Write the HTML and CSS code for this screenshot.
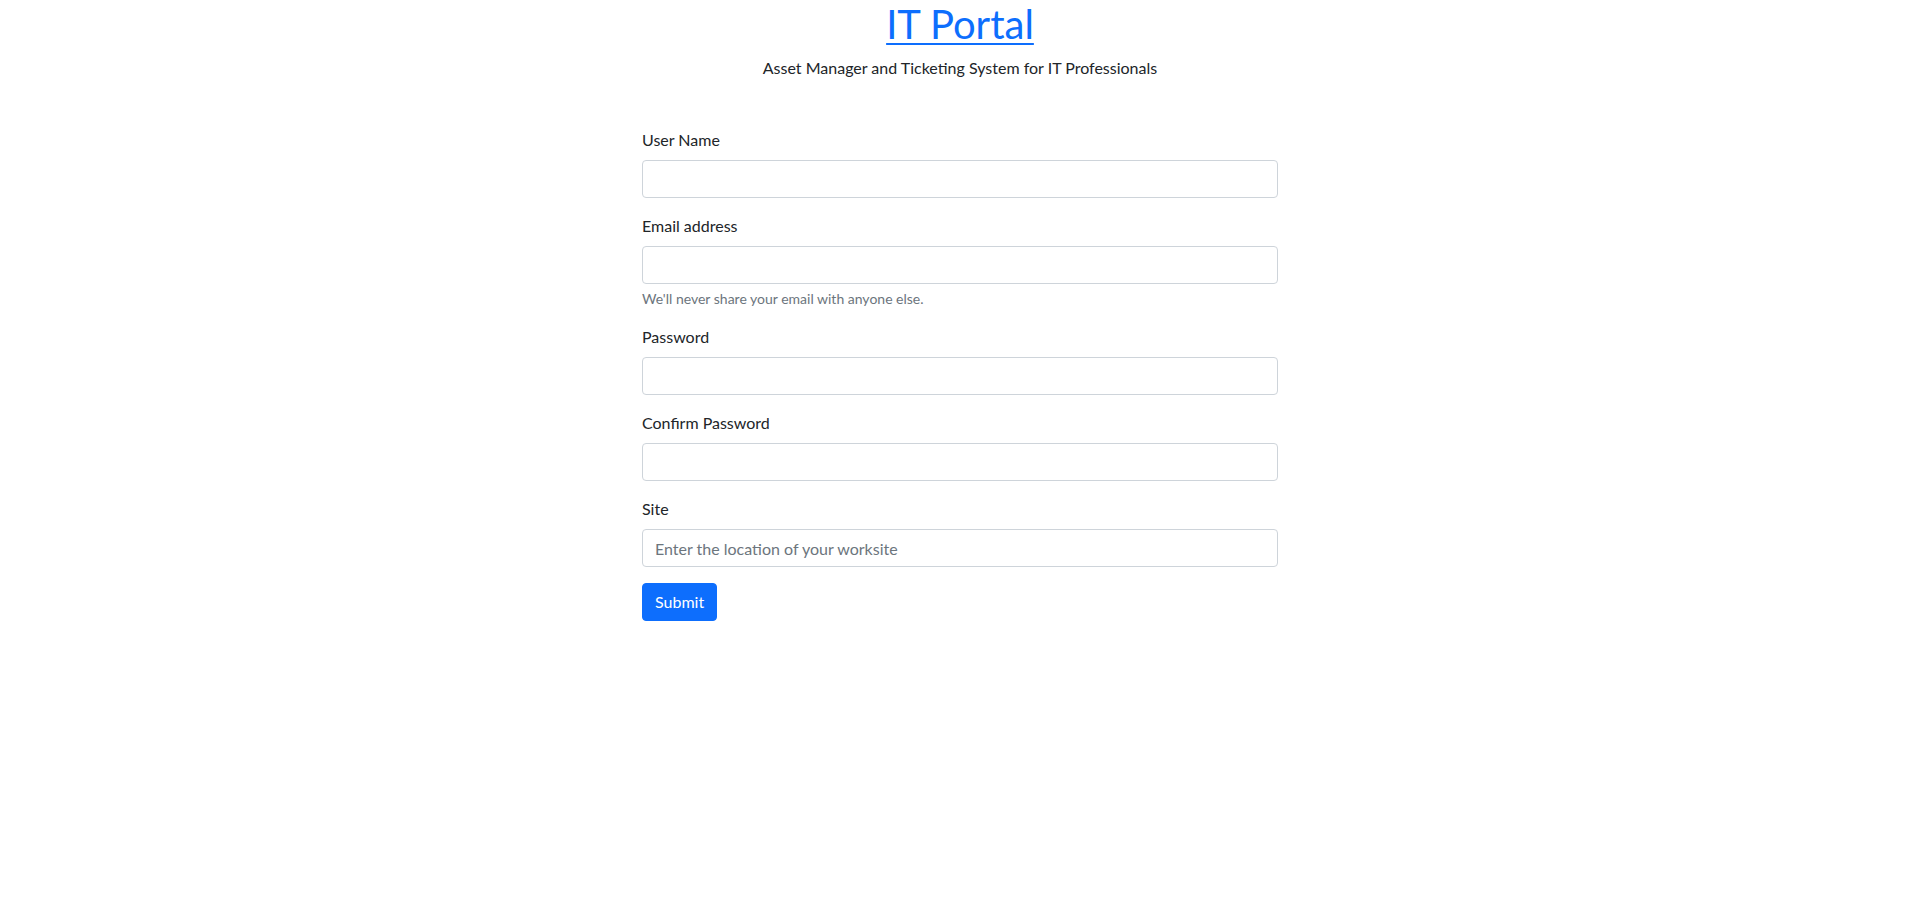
FILE: index.html
```html
<!DOCTYPE html>
<html lang="en">
<head>
<meta charset="utf-8">
<title>IT Portal</title>
<link rel="stylesheet" href="styles.css">
</head>
<body>
<header class="header">
  <h1 class="title"><a href="#" class="title-link">IT Portal</a></h1>
  <p class="subtitle">Asset Manager and Ticketing System for IT Professionals</p>
</header>
<form class="form">
  <div class="group">
    <label class="label" for="username">User Name</label>
    <input class="control" id="username" type="text">
  </div>
  <div class="group">
    <label class="label" for="email">Email address</label>
    <input class="control" id="email" type="email">
    <div class="help">We'll never share your email with anyone else.</div>
  </div>
  <div class="group">
    <label class="label" for="password">Password</label>
    <input class="control" id="password" type="password">
  </div>
  <div class="group">
    <label class="label" for="confirm">Confirm Password</label>
    <input class="control" id="confirm" type="password">
  </div>
  <div class="group">
    <label class="label" for="site">Site</label>
    <input class="control" id="site" type="text" placeholder="Enter the location of your worksite">
  </div>
  <button class="btn" type="submit">Submit</button>
</form>
</body>
</html>
```
FILE: styles.css
```css
* { box-sizing: border-box; }
html, body { margin: 0; padding: 0; background: #fff; }
body {
  font-family: Lato, "Open Sans", sans-serif;
  font-size: 16px;
  line-height: 1.5;
  color: #212529;
}
.header { text-align: center; }
.title { margin: 0 0 8px; font-size: 40px; font-weight: 400; line-height: 1.2; }
.title-link { color: #0d6efd; text-decoration: underline; text-decoration-thickness: 2px; text-underline-offset: 4px; }
.subtitle { margin: 0; }
.form { width: 636px; margin: 48px auto 0; }
.group { margin-bottom: 16px; }
.label { display: block; margin-bottom: 8px; }
.control {
  display: block; width: 100%; height: 38px;
  padding: 6px 12px; font: inherit; color: #212529;
  background: #fff; border: 1px solid #ced4da; border-radius: 4px;
}
.control::placeholder { color: #6c757d; opacity: 1; }
.help { margin-top: 4px; font-size: 14px; color: #6c757d; }
.btn {
  display: inline-block; height: 38px; padding: 6px 12px;
  font: inherit; color: #fff; background: #0d6efd;
  border: 1px solid #0d6efd; border-radius: 4px;
}
```
